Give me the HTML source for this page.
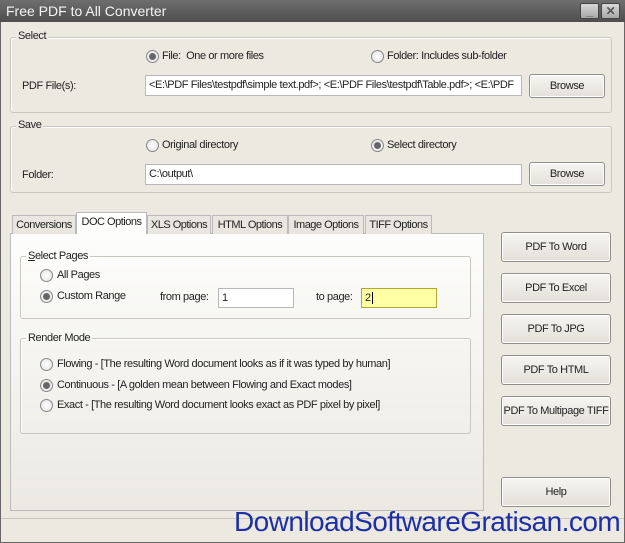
<!DOCTYPE html>
<html><head><meta charset="utf-8"><style>
*{box-sizing:border-box;margin:0;padding:0}
body{width:625px;height:543px;overflow:hidden;background:#ece9e1;font-family:"Liberation Sans",sans-serif;font-size:11px;color:#222;letter-spacing:-0.4px;position:relative}
.a{position:absolute;white-space:nowrap}
.title{left:0;top:0;width:625px;height:22px;background:linear-gradient(#6e6e6e,#4e4e4e);color:#f4f4f4;font-size:14px;padding:3px 6px;letter-spacing:0}
.tb{top:3px;width:19px;height:16px;background:linear-gradient(#d8d8d8,#a8a8a8);border:1px solid #444;border-radius:2px;color:#555;font-size:12px;text-align:center;line-height:14px;font-weight:bold}
.grp{border:1px solid #c8c6bd;border-radius:3px;box-shadow:inset 1px 1px 0 #fff}
.lbl{background:#ece9e1;padding:0 2px}
.inp{background:#fff;border:1px solid #b8b8b8;padding:3px 3px;height:21px}
.btn{border:1px solid #8f8f8a;border-radius:3px;background:linear-gradient(#f6f5f1,#e2e0d8);text-align:center;box-shadow:inset 0 0 0 1px #fff}
.rad{width:13px;height:13px;border-radius:50%;border:1px solid #888;background:radial-gradient(#fff,#e0e0e0)}
.rad.on::after{content:"";position:absolute;left:2px;top:2px;width:7px;height:7px;border-radius:50%;background:#666}
.tab{top:215px;height:19px;border:1px solid #bbb;border-bottom:none;background:#e8e6de;padding-top:3px;text-align:center;font-size:11px;letter-spacing:-0.5px}
</style></head><body>
<div class="a title">Free PDF to All Converter</div>
<div class="a tb" style="left:580px">_</div>
<div class="a tb" style="left:601px">✕</div>

<div class="a grp" style="left:10px;top:37px;width:602px;height:76px"></div>
<div class="a lbl" style="left:16px;top:30px">Select</div>
<div class="a rad on" style="left:146px;top:50px"></div><div class="a" style="left:162px;top:50px">File:&nbsp; One or more files</div>
<div class="a rad" style="left:371px;top:50px"></div><div class="a" style="left:387px;top:50px">Folder: Includes sub-folder</div>
<div class="a" style="left:22px;top:80px">PDF File(s):</div>
<div class="a inp" style="left:145px;top:75px;width:377px">&lt;E:\PDF Files\testpdf\simple text.pdf&gt;; &lt;E:\PDF Files\testpdf\Table.pdf&gt;; &lt;E:\PDF</div>
<div class="a btn" style="left:529px;top:74px;width:76px;height:24px;line-height:22px">Browse</div>

<div class="a grp" style="left:10px;top:126px;width:602px;height:67px"></div>
<div class="a lbl" style="left:16px;top:119px">Save</div>
<div class="a rad" style="left:146px;top:139px"></div><div class="a" style="left:162px;top:139px">Original directory</div>
<div class="a rad on" style="left:371px;top:139px"></div><div class="a" style="left:387px;top:139px">Select directory</div>
<div class="a" style="left:22px;top:169px">Folder:</div>
<div class="a inp" style="left:145px;top:164px;width:377px">C:\output\</div>
<div class="a btn" style="left:529px;top:162px;width:76px;height:24px;line-height:22px">Browse</div>

<div class="a" style="left:10px;top:233px;width:474px;height:278px;border:1px solid #bbb;background:linear-gradient(#fdfdfc,#ebe9e2)"></div>
<div class="a tab" style="left:12px;width:64px">Conversions</div>
<div class="a tab" style="left:76px;top:212px;height:22px;width:71px;background:#fdfdfc;padding-top:3px">DOC Options</div>
<div class="a tab" style="left:147px;width:64px">XLS Options</div>
<div class="a tab" style="left:212px;width:76px">HTML Options</div>
<div class="a tab" style="left:288px;width:76px">Image Options</div>
<div class="a tab" style="left:365px;width:67px">TIFF Options</div>

<div class="a grp" style="left:20px;top:256px;width:451px;height:63px;background:transparent"></div>
<div class="a lbl" style="left:26px;top:250px;background:#fbfbfa"><u>S</u>elect Pages</div>
<div class="a rad" style="left:40px;top:269px"></div><div class="a" style="left:57px;top:269px">All Pages</div>
<div class="a rad on" style="left:40px;top:290px"></div><div class="a" style="left:57px;top:290px">Custom Range</div>
<div class="a" style="left:160px;top:291px">from page:</div>
<div class="a inp" style="left:218px;top:288px;width:76px;height:20px">1</div>
<div class="a" style="left:316px;top:291px">to page:</div>
<div class="a inp" style="left:361px;top:288px;width:76px;height:20px;background:#ffffa6;border-color:#b0a830">2<span style="border-left:1px solid #000;margin-left:1px"></span></div>

<div class="a grp" style="left:20px;top:338px;width:451px;height:96px;background:transparent"></div>
<div class="a lbl" style="left:26px;top:332px;background:#f6f6f3">Render Mode</div>
<div class="a rad" style="left:40px;top:358px"></div><div class="a" style="left:57px;top:358px">Flowing - [The resulting Word document looks as if it was typed by human]</div>
<div class="a rad on" style="left:40px;top:379px"></div><div class="a" style="left:57px;top:379px">Continuous - [A golden mean between Flowing and Exact modes]</div>
<div class="a rad" style="left:40px;top:399px"></div><div class="a" style="left:57px;top:399px">Exact - [The resulting Word document looks exact as PDF pixel by pixel]</div>

<div class="a btn" style="left:501px;top:232px;width:110px;height:30px;line-height:28px">PDF To Word</div>
<div class="a btn" style="left:501px;top:273px;width:110px;height:30px;line-height:28px">PDF To Excel</div>
<div class="a btn" style="left:501px;top:314px;width:110px;height:30px;line-height:28px">PDF To JPG</div>
<div class="a btn" style="left:501px;top:355px;width:110px;height:30px;line-height:28px">PDF To HTML</div>
<div class="a btn" style="left:501px;top:396px;width:110px;height:30px;line-height:28px">PDF To Multipage TIFF</div>
<div class="a btn" style="left:501px;top:477px;width:110px;height:30px;line-height:28px">Help</div>

<div class="a" style="left:0;top:518px;width:625px;border-top:1px solid #c8c6bd"></div>
<div class="a" style="left:234px;top:506px;font-size:28px;color:#1c2fa8;letter-spacing:-0.55px">DownloadSoftwareGratisan.com</div>
<div class="a" style="left:0;top:22px;width:625px;height:521px;border:1px solid #666;border-top:none"></div>
</body></html>
